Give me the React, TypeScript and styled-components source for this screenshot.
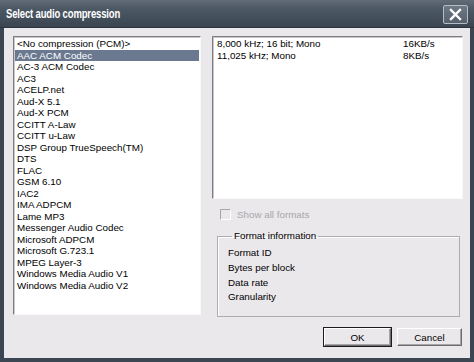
import React from 'react'
import styled, { createGlobalStyle } from 'styled-components'

const GlobalStyle = createGlobalStyle`
    html, body {
        margin: 0;
        padding: 0;
        background: #3c4652;
    }
    * {
        box-sizing: border-box;
    }
`

const codecs = [
    '<No compression (PCM)>',
    'AAC ACM Codec',
    'AC-3 ACM Codec',
    'AC3',
    'ACELP.net',
    'Aud-X 5.1',
    'Aud-X PCM',
    'CCITT A-Law',
    'CCITT u-Law',
    'DSP Group TrueSpeech(TM)',
    'DTS',
    'FLAC',
    'GSM 6.10',
    'IAC2',
    'IMA ADPCM',
    'Lame MP3',
    'Messenger Audio Codec',
    'Microsoft ADPCM',
    'Microsoft G.723.1',
    'MPEG Layer-3',
    'Windows Media Audio V1',
    'Windows Media Audio V2',
]

const formats = [
    { label: '8,000 kHz; 16 bit; Mono', rate: '16KB/s' },
    { label: '11,025 kHz; Mono', rate: '8KB/s' },
]

const infoRows = ['Format ID', 'Bytes per block', 'Data rate', 'Granularity']

const Window = styled.div`
    width: 474px;
    height: 362px;
    display: flex;
    flex-direction: column;
    background: #3c4652;
    padding: 0 4px 4px 4px;
    font-family: 'Liberation Sans', Arial, sans-serif;
    font-size: 9.8px;
    color: #000;
`

const TitleBar = styled.div`
    height: 28px;
    margin: 0 -4px;
    padding: 0 6px 0 6px;
    display: flex;
    align-items: center;
    justify-content: space-between;
    background: linear-gradient(#626c77 0%, #4e5966 30%, #434e5b 70%, #3a4450 100%);
    border-bottom: 1px solid #2e3640;
`

// condensed bold caption, like the XP theme font
const Title = styled.div`
    color: #fff;
    font-weight: bold;
    font-size: 12.5px;
    letter-spacing: -0.2px;
    transform: scaleX(0.76);
    transform-origin: left center;
    white-space: nowrap;
`

const CloseButton = styled.div`
    width: 25px;
    height: 19px;
    margin-top: 2px;
    display: flex;
    align-items: center;
    justify-content: center;
    background: linear-gradient(#6e7985, #56616d);
    border: 1px solid #b4bcc4;
    border-radius: 2px;
`

const Body = styled.div`
    flex: 1;
    background: #ebe8ec;
    padding: 8px 7px 11px 9px;
    display: grid;
    grid-template-columns: 188px 251px;
    grid-template-rows: 279px 18px;
    column-gap: 11px;
    row-gap: 13px;
`

const ListBox = styled.div<{ $height?: number }>`
    background: #fff;
    border-top: 1px solid #7f7d82;
    border-left: 1px solid #7f7d82;
    border-right: 1px solid #f8f8f8;
    border-bottom: 1px solid #f8f8f8;
    box-shadow: inset 1px 1px 0 #c9c7cb;
    padding: 1px 1px;
    height: ${(p) => (p.$height ? `${p.$height}px` : '100%')};
    overflow: hidden;
`

const CodecRow = styled.div<{ $selected?: boolean }>`
    height: 11.5px;
    line-height: 11.5px;
    padding-left: 2px;
    white-space: nowrap;
    background: ${(p) => (p.$selected ? '#6b7990' : 'transparent')};
    color: ${(p) => (p.$selected ? '#fff' : '#000')};
`

const RightColumn = styled.div`
    display: flex;
    flex-direction: column;
`

const FormatRow = styled.div`
    display: grid;
    grid-template-columns: 186px auto;
    height: 11.5px;
    line-height: 11.5px;
    padding-left: 3px;
    white-space: nowrap;
`

const CheckRow = styled.div`
    display: flex;
    align-items: center;
    gap: 6px;
    margin: 10px 0 0 8px;
    color: #a8a6aa;
`

const CheckBox = styled.div`
    width: 11px;
    height: 11px;
    border-top: 1px solid #a9a7ab;
    border-left: 1px solid #a9a7ab;
    border-right: 1px solid #fff;
    border-bottom: 1px solid #fff;
    background: #ebe8ec;
`

const GroupBox = styled.fieldset`
    flex: 1;
    margin: 10px 3px -2px 5px;
    padding: 4px 0 0 10px;
    border: 1px solid #aeacb0;
    box-shadow: 1px 1px 0 #fff inset;
    min-width: 0;
`

const Legend = styled.legend`
    padding: 0 2px;
    margin-left: 4px;
    line-height: 12px;
`

const InfoRow = styled.div`
    height: 14.8px;
    line-height: 14.8px;
`

const ButtonRow = styled.div`
    grid-column: 1 / span 2;
    display: flex;
    justify-content: flex-end;
    gap: 6px;
    padding-right: 1px;
`

const Button = styled.div<{ $default?: boolean; $width: number }>`
    width: ${(p) => p.$width}px;
    height: 18px;
    display: flex;
    align-items: center;
    justify-content: center;
    background: #ebe8ec;
    border-top: 1px solid #fff;
    border-left: 1px solid #fff;
    border-right: 1px solid #6e6c70;
    border-bottom: 1px solid #6e6c70;
    box-shadow: ${(p) =>
        p.$default ? '0 0 0 1px #1c1c1c, inset -1px -1px 0 #a6a4a8' : 'inset -1px -1px 0 #a6a4a8'};
`

export default function App() {
    return (
        <>
            <GlobalStyle />
            <Window>
                <TitleBar>
                    <Title>Select audio compression</Title>
                    <CloseButton>
                        <svg width="13" height="13" viewBox="0 0 13 13">
                            <path
                                d="M2 2 L11 11 M11 2 L2 11"
                                stroke="#fff"
                                strokeWidth="2.4"
                                strokeLinecap="square"
                            />
                        </svg>
                    </CloseButton>
                </TitleBar>
                <Body>
                    <ListBox>
                        {codecs.map((c, i) => (
                            <CodecRow key={c} $selected={i === 1}>
                                {c}
                            </CodecRow>
                        ))}
                    </ListBox>
                    <RightColumn>
                        <ListBox $height={163}>
                            {formats.map((f) => (
                                <FormatRow key={f.label}>
                                    <span>{f.label}</span>
                                    <span>{f.rate}</span>
                                </FormatRow>
                            ))}
                        </ListBox>
                        <CheckRow>
                            <CheckBox />
                            Show all formats
                        </CheckRow>
                        <GroupBox>
                            <Legend>Format information</Legend>
                            {infoRows.map((r) => (
                                <InfoRow key={r}>{r}</InfoRow>
                            ))}
                        </GroupBox>
                    </RightColumn>
                    <ButtonRow>
                        <Button $default $width={67}>
                            OK
                        </Button>
                        <Button $width={65}>Cancel</Button>
                    </ButtonRow>
                </Body>
            </Window>
        </>
    )
}
